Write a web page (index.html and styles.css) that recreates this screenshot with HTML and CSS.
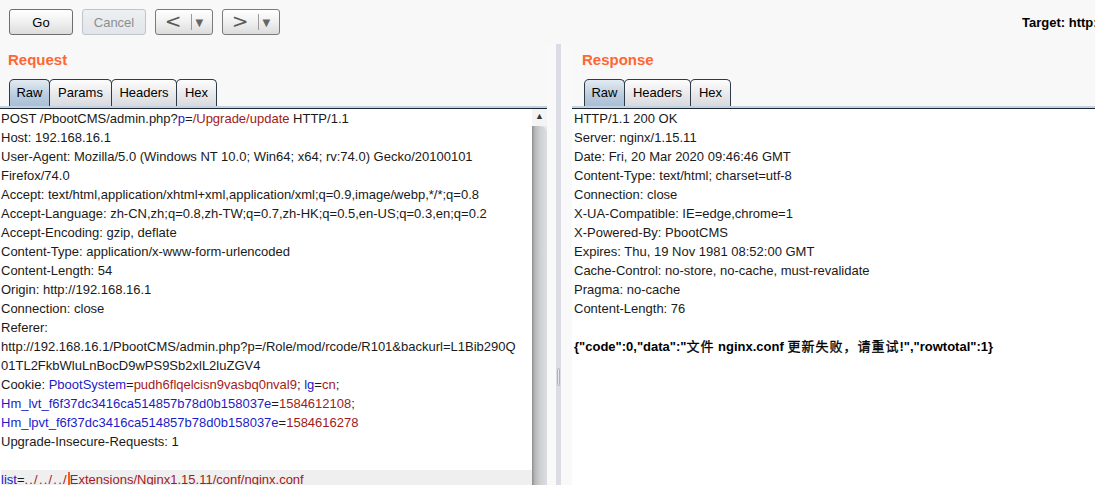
FILE: index.html
```html
<!DOCTYPE html>
<html lang="en">
<head>
  <meta charset="UTF-8" />
  <title>Repeater</title>
  <link rel="stylesheet" href="styles.css">
</head>
<body>

  <div class="toolbar">
    <button class="btn">Go</button>
    <button class="btn disabled">Cancel</button>
    <button class="btn nav"><span class="arrow">&lt;</span><span class="sep"></span><span class="drop">&#9660;</span></button>
    <button class="btn nav"><span class="arrow">&gt;</span><span class="sep"></span><span class="drop">&#9660;</span></button>
    <div class="target">Target: http://192.168.16.1</div>
  </div>

  <div class="panes">
    <div class="pane request">
      <div class="pane-title">Request</div>
      <div class="tabs">
        <div class="tab active w-raw">Raw</div>
        <div class="tab w-params">Params</div>
        <div class="tab w-headers">Headers</div>
        <div class="tab w-hex">Hex</div>
      </div>
      <div class="tab-line"></div>
      <div class="editor">
        <div class="text">
          <div class="line">POST /PbootCMS/admin.php?<span class="k">p</span>=<span class="v">/Upgrade/update</span> HTTP/1.1</div>
          <div class="line">Host: 192.168.16.1</div>
          <div class="line">User-Agent: Mozilla/5.0 (Windows NT 10.0; Win64; x64; rv:74.0) Gecko/20100101</div>
          <div class="line">Firefox/74.0</div>
          <div class="line">Accept: text/html,application/xhtml+xml,application/xml;q=0.9,image/webp,*/*;q=0.8</div>
          <div class="line">Accept-Language: zh-CN,zh;q=0.8,zh-TW;q=0.7,zh-HK;q=0.5,en-US;q=0.3,en;q=0.2</div>
          <div class="line">Accept-Encoding: gzip, deflate</div>
          <div class="line">Content-Type: application/x-www-form-urlencoded</div>
          <div class="line">Content-Length: 54</div>
          <div class="line">Origin: http://192.168.16.1</div>
          <div class="line">Connection: close</div>
          <div class="line">Referer:</div>
          <div class="line">http://192.168.16.1/PbootCMS/admin.php?p=/Role/mod/rcode/R101&amp;backurl=L1Bib290Q</div>
          <div class="line">01TL2FkbWluLnBocD9wPS9Sb2xlL2luZGV4</div>
          <div class="line">Cookie: <span class="k">PbootSystem</span>=<span class="v">pudh6flqelcisn9vasbq0nval9</span>; <span class="k">lg</span>=<span class="v">cn</span>;</div>
          <div class="line"><span class="k">Hm_lvt_f6f37dc3416ca514857b78d0b158037e</span>=<span class="v">1584612108</span>;</div>
          <div class="line"><span class="k">Hm_lpvt_f6f37dc3416ca514857b78d0b158037e</span>=<span class="v">1584616278</span></div>
          <div class="line">Upgrade-Insecure-Requests: 1</div>
          <div class="line">&nbsp;</div>
          <div class="line current"><span class="k">list</span>=<span class="v dots">../../../</span><span class="caret"></span><span class="v">Extensions/Nginx1.15.11/conf/nginx.conf</span></div>
        </div>
        <div class="scrollbar">
          <div class="scroll-up">&#9650;</div>
          <div class="thumb"></div>
        </div>
      </div>
    </div>

    <div class="divider">
      <div class="divider-bar"><div class="grip"></div></div>
    </div>

    <div class="pane response">
      <div class="pane-title">Response</div>
      <div class="tabs">
        <div class="tab active w-raw">Raw</div>
        <div class="tab w-headers2">Headers</div>
        <div class="tab w-hex">Hex</div>
      </div>
      <div class="tab-line"></div>
      <div class="editor">
        <div class="text">
          <div class="line">HTTP/1.1 200 OK</div>
          <div class="line">Server: nginx/1.15.11</div>
          <div class="line">Date: Fri, 20 Mar 2020 09:46:46 GMT</div>
          <div class="line">Content-Type: text/html; charset=utf-8</div>
          <div class="line">Connection: close</div>
          <div class="line">X-UA-Compatible: IE=edge,chrome=1</div>
          <div class="line">X-Powered-By: PbootCMS</div>
          <div class="line">Expires: Thu, 19 Nov 1981 08:52:00 GMT</div>
          <div class="line">Cache-Control: no-store, no-cache, must-revalidate</div>
          <div class="line">Pragma: no-cache</div>
          <div class="line">Content-Length: 76</div>
          <div class="line">&nbsp;</div>
          <div class="line body">{"code":0,"data":"<span class="cjk">文件</span> nginx.conf <span class="cjk">更新失败，请重试</span>!","rowtotal":1}</div>
        </div>
      </div>
    </div>
  </div>

</body>
</html>
```

FILE: styles.css
```css
* {
  margin: 0;
  padding: 0;
  box-sizing: border-box;
}

body, html {
  height: 100%;
  overflow: hidden;
}

body {
  background-color: #f8f8f8;
  font-family: 'Liberation Sans', Arial, 'Noto Sans CJK SC', sans-serif;
  font-size: 13px;
  color: #1a1a1a;
  display: flex;
  flex-direction: column;
}

.toolbar {
  height: 44px;
  display: flex;
  align-items: center;
  gap: 9px;
  padding-left: 9px;
  flex-shrink: 0;
}

.btn {
  width: 64px;
  height: 26px;
  border: 1px solid #6f6f6f;
  border-radius: 3px;
  background: linear-gradient(#ffffff, #f2f2f2 45%, #dcdcdc);
  font-family: inherit;
  font-size: 13px;
  color: #000;
  display: flex;
  align-items: center;
  justify-content: center;
}

.btn.disabled {
  color: #8e8e8e;
  border-color: #c0c4ca;
  background: linear-gradient(#eef0f2, #e2e5e9);
}

.btn.nav {
  width: 58px;
  color: #5a5a5a;
  border-color: #7a7a7a;
}

.arrow {
  font-size: 20px;
  line-height: 20px;
  margin-top: -2px;
  font-family: 'DejaVu Sans', sans-serif;
}

.sep {
  width: 1px;
  height: 16px;
  background-color: #9a9a9a;
  margin: 0 4px 0 9px;
}

.drop {
  font-size: 10px;
  color: #666;
  font-family: 'DejaVu Sans', sans-serif;
}

.target {
  margin-left: auto;
  font-weight: bold;
  white-space: nowrap;
  overflow: hidden;
  width: 73px;
  flex-shrink: 0;
  color: #000;
}

.panes {
  flex: 1;
  display: flex;
  min-height: 0;
}

.pane {
  display: flex;
  flex-direction: column;
}

.request {
  width: 547px;
}

.response {
  flex: 1;
}

.pane-title {
  height: 35px;
  line-height: 32px;
  padding-left: 8px;
  color: #ff6633;
  font-weight: bold;
  font-size: 15px;
}

.response .pane-title {
  padding-left: 10px;
}

.tabs {
  display: flex;
  padding-left: 9px;
  height: 27px;
}

.response .tabs {
  padding-left: 12px;
}

.tab {
  height: 27px;
  line-height: 25px;
  text-align: center;
  border: 1px solid #2e3a46;
  border-bottom: none;
  border-radius: 5px 5px 0 0;
  background: linear-gradient(#fdfdfd, #e6e7ea 60%, #d9dade);
  color: #000;
  margin-right: -1px;
}

.w-raw { width: 41px; }
.w-params { width: 63px; }
.w-headers { width: 66px; }
.w-headers2 { width: 67px; }
.w-hex { width: 41px; }

.tab.active {
  background: linear-gradient(#e3eaf2, #b9cbde 60%, #a9bfd6);
  position: relative;
  z-index: 1;
}

.tab-line {
  height: 3px;
  background-color: #c0d2e4;
  border-bottom: 1px solid #1e2630;
  flex-shrink: 0;
}

.editor {
  flex: 1;
  display: flex;
  min-height: 0;
  background-color: #fff;
}

.text {
  flex: 1;
  overflow: hidden;
  padding-left: 1px;
}

.response .text {
  padding-left: 2px;
}

.line {
  height: 19px;
  line-height: 19px;
  white-space: nowrap;
}

.line.current {
  background-color: #efefef;
}

.line.body {
  font-weight: bold;
  color: #000;
}

.cjk {
  font-weight: normal;
  letter-spacing: 1px;
  -webkit-text-stroke: 0.3px #000;
}

.k {
  color: #1c1cc8;
}

.v {
  color: #a31a1a;
}

.dots {
  letter-spacing: 1.2px;
}

.caret {
  display: inline-block;
  width: 2px;
  height: 15px;
  vertical-align: -3px;
  background-color: #ff5a1e;
}

.scrollbar {
  width: 15px;
  display: flex;
  flex-direction: column;
  background-color: #e8e8e8;
}

.scroll-up {
  height: 17px;
  background-color: #f4f4f4;
  font-size: 9px;
  line-height: 15px;
  text-align: center;
  color: #333;
}

.thumb {
  flex: 1;
  border-radius: 0 7px 0 0;
  background: linear-gradient(to right, #8e8e8e, #b8b8b8 20%, #cfd0d3 55%, #dcdde0);
}

.divider {
  width: 25px;
  padding-left: 9px;
  background-color: #f9f9f9;
}

.divider-bar {
  width: 5px;
  height: 100%;
  background-color: #dcdce6;
  display: flex;
  align-items: center;
  justify-content: center;
  padding-top: 225px;
}

.grip {
  width: 3px;
  height: 18px;
  border: 1px solid #b0b0bc;
  border-radius: 2px;
  background-color: #e8e8ee;
}
```
